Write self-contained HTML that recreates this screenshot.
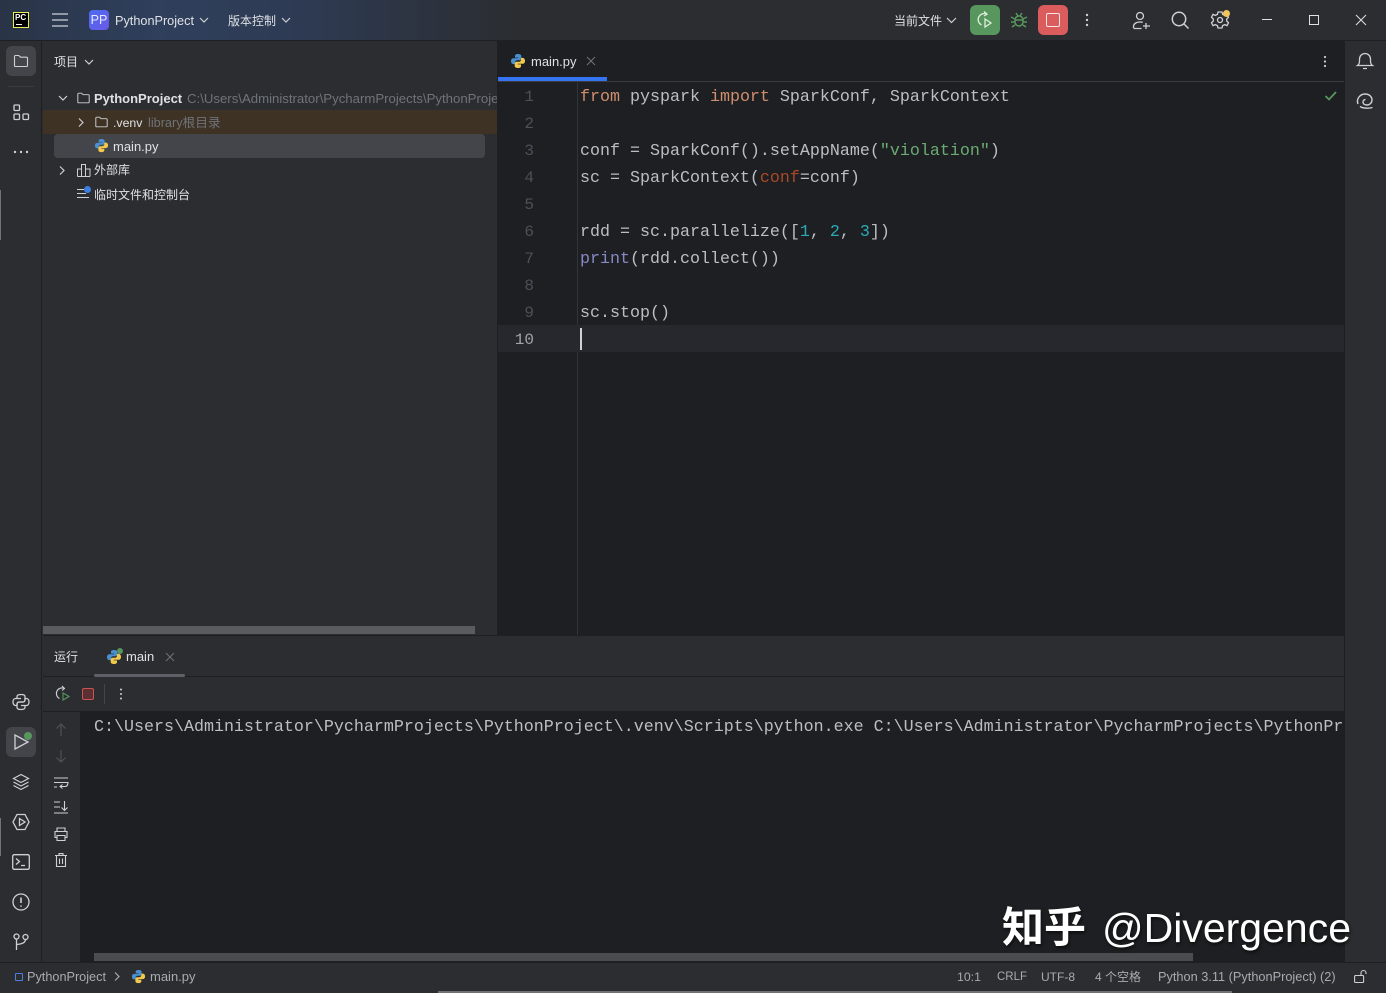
<!DOCTYPE html>
<html lang="zh"><head><meta charset="utf-8"><title>PyCharm</title>
<style>
*{box-sizing:border-box}
html,body{margin:0;padding:0;width:1386px;height:993px;overflow:hidden;background:#2b2d30}
body{position:relative;font-family:"Liberation Sans","Noto Sans CJK SC",sans-serif;font-size:13px;color:#dfe1e5;fill:none;stroke:#ced0d6;stroke-width:1.2}
.a{position:absolute}
.t{position:absolute;white-space:nowrap;line-height:18px;height:18px;margin-top:1px}
.u{margin-top:0}
.m{position:absolute;white-space:pre;font-family:"Liberation Mono",monospace;font-size:16.67px;line-height:27px;height:27px;color:#bcbec4;margin-top:1px}
.n{position:absolute;left:498px;width:36px;text-align:right;font-family:"Liberation Mono",monospace;font-size:16px;line-height:27px;color:#4b5059;margin-top:1px}
.k{color:#cf8e6d}.b{color:#8888c6}.s{color:#6aab73}.d{color:#2aacb8}.p{color:#aa4926}
svg{position:absolute;overflow:visible}
</style></head><body>
<svg width="0" height="0" style="position:absolute"><defs>
<symbol id="py" viewBox="0 0 16 16" overflow="visible"><path d="M8 1C5.600 1 5 2 5 3v1.600h3.200v.6H3.300C2 5.200 1 6.300 1 8.100s1 3 2.300 3H5V9.300c0-1.200 1-2.100 2.200-2.100h2.300c1 0 1.800-.8 1.800-1.800V3c0-1.200-1.300-2-3.300-2z" fill="#4a8fd0" stroke="none"/><path d="M8 15c2.400 0 3-1 3-2v-1.600H7.800v-.6h4.900c1.300 0 2.300-1.100 2.300-2.900s-1-3-2.300-3H11v1.800c0 1.200-1 2.100-2.200 2.100H6.500c-1 0-1.800.8-1.800 1.800V13c0 1.200 1.300 2 3.300 2z" fill="#f2c94c" stroke="none"/></symbol>
<symbol id="fold" viewBox="0 0 16 16" overflow="visible"><path d="M1.500 12.500v-9a1 1 0 0 1 1-1h3.300l1.700 1.700h6a1 1 0 0 1 1 1v7.300a1 1 0 0 1-1 1h-11a1 1 0 0 1-1-1z" fill="none" stroke="#ced0d6" stroke-width="1.100"/></symbol>
</defs></svg>

<!-- title bar -->
<div class="a" style="left:0;top:0;width:1386px;height:40px;background:#2b2d30"></div>
<div class="a" style="left:0;top:0;width:520px;height:40px;background:linear-gradient(90deg,#2a3446 0%,#2f3f5c 30%,#2e3a52 60%,#2b2d30 100%)"></div>
<div class="a" style="left:0;top:40px;width:1386px;height:1px;background:#1e1f22"></div>
<div class="a" style="left:13px;top:12px;width:16px;height:16px;background:#000;border:1px solid #e9ee55"></div>
<div class="t u" style="left:15px;top:13px;font-size:8px;font-weight:bold;color:#fff;line-height:10px;height:10px">PC</div>
<div class="a" style="left:16px;top:24px;width:6px;height:1px;background:#fff"></div>
<svg style="left:52px;top:13px" width="16" height="14" stroke-width="1.300"><path d="M0 1h16M0 7h16M0 13h16"/></svg>
<div class="a" style="left:89px;top:10px;width:20px;height:20px;border-radius:4px;background:linear-gradient(135deg,#4b6df0,#6a58e8)"></div>
<div class="t" style="left:89px;top:10px;width:20px;text-align:center;font-size:12.500px;color:#e8ebff">PP</div>
<div class="t" style="left:115px;top:11px;font-size:12.700px">PythonProject</div>
<svg style="left:199px;top:17px" width="10" height="6"><path d="M1 1l4 4 4-4"/></svg>
<div class="t" style="left:228px;top:11px;font-size:12px">版本控制</div>
<svg style="left:281px;top:17px" width="10" height="6"><path d="M1 1l4 4 4-4"/></svg>
<div class="t" style="left:894px;top:11px;font-size:12px">当前文件</div>
<svg style="left:946px;top:17px" width="11" height="6"><path d="M1 1l4.500 4.500 4.500-4.500"/></svg>
<div class="a" style="left:970px;top:5px;width:30px;height:30px;border-radius:6px;background:#57965c"></div>
<svg style="left:976px;top:11px" width="18" height="18" stroke="#dcefdc" stroke-width="1.300"><path d="M11 3.200A6 6 0 1 0 5.500 14"/><path d="M8 .5l3 2.700-3 1.800"/><path d="M9 8v8l6-4z"/></svg>
<svg style="left:1011px;top:11px" width="16" height="18" stroke="#57965c" stroke-width="1.500"><rect x="4" y="5" width="8" height="10" rx="4"/><path d="M5 2l2 3M11 2L9 5M0 6l4 2M16 6l-4 2M0 11h4M16 11h-4M1 16l3-2M15 16l-3-2M4 9h8"/></svg>
<div class="a" style="left:1038px;top:5px;width:30px;height:30px;border-radius:6px;background:#db5c5c"></div>
<div class="a" style="left:1046px;top:13px;width:14px;height:14px;border-radius:2px;border:1.500px solid #fbe4e4"></div>
<svg style="left:1085px;top:13px" width="4" height="14" fill="#ced0d6" stroke="none"><circle cx="2" cy="2" r="1.200"/><circle cx="2" cy="7" r="1.200"/><circle cx="2" cy="12" r="1.200"/></svg>
<svg style="left:1132px;top:11px" width="19" height="19" stroke-width="1.300"><circle cx="8" cy="5" r="3.500"/><path d="M1.500 17v-1.500c0-2.500 2.500-4.500 6.500-4.500 1 0 2 .1 2.800.4M1.500 17.500h8M14 12v6M11 15h7"/></svg>
<svg style="left:1171px;top:11px" width="18" height="18" stroke-width="1.500"><circle cx="8" cy="8" r="6.700"/><path d="M13 13l4.500 4.500"/></svg>
<svg style="left:1211px;top:11px" width="18" height="18" stroke-width="1.300"><path d="M7 1h4l.6 2.400 2.200 1 2.200-1 1.500 2.800-1.800 1.800v2l1.800 1.800-1.500 2.800-2.200-1-2.200 1L11 17H7l-.6-2.400-2.200-1-2.200 1L.5 11.800l1.800-1.800V8L.5 6.200 2 3.400l2.200 1 2.200-1z"/><circle cx="9" cy="9" r="2.500"/></svg>
<div class="a" style="left:1223px;top:10px;width:7px;height:7px;border-radius:50%;background:#f2c55c"></div>
<div class="a" style="left:1262px;top:19px;width:10px;height:1px;background:#dfe1e5"></div>
<div class="a" style="left:1309px;top:15px;width:10px;height:10px;border:1px solid #dfe1e5"></div>
<svg style="left:1356px;top:15px" width="10" height="10" stroke="#dfe1e5" stroke-width="1"><path d="M0 0l10 10M10 0L0 10"/></svg>

<!-- left strip -->
<div class="a" style="left:0;top:41px;width:42px;height:921px;background:#2b2d30;border-right:1px solid #1e1f22"></div>
<div class="a" style="left:6px;top:46px;width:30px;height:30px;border-radius:6px;background:#43454a"></div>
<svg style="left:12px;top:53px" width="18" height="16"><use href="#fold" width="18" height="16"/></svg>
<div class="a" style="left:8px;top:86px;width:26px;height:1px;background:#393b40"></div>
<svg style="left:13px;top:104px" width="16" height="16" stroke-width="1.300"><rect x="1" y="1" width="5.500" height="5.500" rx="1"/><rect x="1" y="10" width="5.500" height="5.500" rx="1"/><rect x="10" y="10" width="5.500" height="5.500" rx="1"/></svg>
<svg style="left:13px;top:150px" width="16" height="4" fill="#ced0d6" stroke="none"><circle cx="2" cy="2" r="1.200"/><circle cx="8" cy="2" r="1.200"/><circle cx="14" cy="2" r="1.200"/></svg>
<div class="a" style="left:0;top:190px;width:1px;height:50px;background:#6f737a"></div>
<svg style="left:12px;top:693px" width="18" height="18" stroke-width="1.300"><path d="M5 12.500H3.500C2 12.500 1 11 1 9s1-3.500 2.500-3.500H9M5 5.500V3.500C5 2.200 6.500 1.500 9 1.500s4 .7 4 2V7c0 1.100-.9 2-2 2H7c-1.100 0-2 .9-2 2v1.500"/><path transform="rotate(180 9 9)" d="M5 12.500H3.500C2 12.500 1 11 1 9s1-3.500 2.500-3.500H9M5 5.500V3.500C5 2.200 6.500 1.500 9 1.500s4 .7 4 2V7c0 1.100-.9 2-2 2H7c-1.100 0-2 .9-2 2v1.500"/></svg>
<div class="a" style="left:6px;top:727px;width:30px;height:30px;border-radius:6px;background:#43454a"></div>
<svg style="left:14px;top:734px" width="16" height="16" stroke-width="1.300"><path d="M1 1v14l13-7z"/></svg>
<div class="a" style="left:24px;top:732px;width:8px;height:8px;border-radius:50%;background:#57965c"></div>
<svg style="left:12px;top:773px" width="18" height="18" stroke-width="1.200"><path d="M9 1.500l7.500 4L9 9.500l-7.500-4zM1.500 9L9 13l7.500-4M1.500 12.500L9 16.500l7.500-4"/></svg>
<svg style="left:12px;top:813px" width="18" height="18" stroke-width="1.300"><path d="M5 1.500h8l4 7.500-4 7.500H5L1 9z"/><path d="M7.500 5.500v7l5.500-3.500z"/></svg>
<svg style="left:12px;top:854px" width="18" height="16" stroke-width="1.300"><rect x=".7" y=".7" width="16.600" height="14.600" rx="1.500"/><path d="M4 4.500L7.500 7.500 4 10.500M9 11.500h4"/></svg>
<svg style="left:12px;top:893px" width="18" height="18" stroke-width="1.300"><circle cx="9" cy="9" r="8"/><path d="M9 4.500v5.500M9 12.500v1.300" stroke-width="1.600"/></svg>
<svg style="left:13px;top:933px" width="16" height="18" stroke-width="1.300"><circle cx="3.500" cy="3.500" r="2.500"/><circle cx="12.500" cy="4" r="2.500"/><path d="M3.500 6v11M12.500 6.500c0 3-3 4.500-9 5"/></svg>
<div class="a" style="left:0;top:818px;width:1px;height:38px;background:#6f737a"></div>

<!-- project panel -->
<div class="a" style="left:43px;top:41px;width:454px;height:594px;background:#2b2d30"></div>
<div class="t" style="left:54px;top:52px;font-size:12px">项目</div>
<svg style="left:84px;top:59px" width="10" height="6"><path d="M1 1l4 4 4-4"/></svg>
<svg style="left:58px;top:95px" width="10" height="6"><path d="M1 1l4 4 4-4"/></svg>
<svg style="left:76px;top:91px" width="15" height="14"><use href="#fold" width="15" height="14"/></svg>
<div class="t" style="left:94px;top:89px;font-size:13px;font-weight:bold;color:#dfe1e5">PythonProject</div>
<div class="a" style="left:187px;top:90px;width:310px;height:18px;overflow:hidden;white-space:nowrap;line-height:18px;font-size:13.200px;color:#6f737a">C:\Users\Administrator\PycharmProjects\PythonProject</div>
<div class="a" style="left:43px;top:110px;width:454px;height:24px;background:#3d3223"></div>
<svg style="left:78px;top:118px" width="6" height="9"><path d="M1 .5l4 4-4 4"/></svg>
<svg style="left:94px;top:115px" width="15" height="14"><use href="#fold" width="15" height="14"/></svg>
<div class="t" style="left:113px;top:113px;font-size:12.300px">.venv</div>
<div class="t" style="left:148px;top:113px;font-size:12.700px;color:#6f737a">library根目录</div>
<div class="a" style="left:54px;top:134px;width:431px;height:24px;border-radius:4px;background:#43454a"></div>
<svg style="left:94px;top:138px" width="15" height="15"><use href="#py" width="15" height="15"/></svg>
<div class="t" style="left:113px;top:137px;font-size:13px">main.py</div>
<svg style="left:59px;top:166px" width="6" height="9"><path d="M1 .5l4 4-4 4"/></svg>
<svg style="left:77px;top:164px" width="14" height="13" stroke-width="1"><path d="M.5 12.500V5h4v7.500M4.500 12.500V.5h4v12M8.500 12.500V5h4.500v7.500M.5 12.500h12.500"/></svg>
<div class="t" style="left:94px;top:160px;font-size:12px">外部库</div>
<svg style="left:77px;top:188px" width="12" height="11" stroke-width="1"><path d="M0 1.500h7M0 5.500h9M0 9.500h12"/></svg>
<div class="a" style="left:84px;top:186px;width:7px;height:7px;border-radius:50%;background:#3d7fe0"></div>
<div class="t" style="left:94px;top:185px;font-size:12px">临时文件和控制台</div>
<div class="a" style="left:43px;top:626px;width:432px;height:8px;background:#5a5b5e"></div>

<!-- editor -->
<div class="a" style="left:497px;top:41px;width:847px;height:594px;background:#1e1f22;border-left:1px solid #1e1f22"></div>
<div class="a" style="left:498px;top:81px;width:846px;height:1px;background:#393b40"></div>
<div class="a" style="left:498px;top:77px;width:109px;height:4px;background:#3574f0"></div>
<svg style="left:510px;top:53px" width="16" height="16"><use href="#py" width="16" height="16"/></svg>
<div class="t" style="left:531px;top:52px;font-size:13px">main.py</div>
<svg style="left:587px;top:57px" width="8" height="8" stroke="#6f737a" stroke-width="1"><path d="M0 0l8 8M8 0L0 8"/></svg>
<svg style="left:1323px;top:55px" width="4" height="13" fill="#ced0d6" stroke="none"><circle cx="2" cy="2" r="1.100"/><circle cx="2" cy="6.500" r="1.100"/><circle cx="2" cy="11" r="1.100"/></svg>
<div class="a" style="left:577px;top:82px;width:1px;height:553px;background:#313438"></div>
<div class="a" style="left:498px;top:325px;width:846px;height:27px;background:#26282e"></div>
<div class="n" style="top:83px">1</div><div class="n" style="top:110px">2</div><div class="n" style="top:137px">3</div><div class="n" style="top:164px">4</div><div class="n" style="top:191px">5</div><div class="n" style="top:218px">6</div><div class="n" style="top:245px">7</div><div class="n" style="top:272px">8</div><div class="n" style="top:299px">9</div><div class="n" style="top:326px;color:#a1a3ab">10</div>
<div class="m" style="left:580px;top:83px"><span class="k">from</span> pyspark <span class="k">import</span> SparkConf, SparkContext</div>
<div class="m" style="left:580px;top:137px">conf = SparkConf().setAppName(<span class="s">"violation"</span>)</div>
<div class="m" style="left:580px;top:164px">sc = SparkContext(<span class="p">conf</span>=conf)</div>
<div class="m" style="left:580px;top:218px">rdd = sc.parallelize([<span class="d">1</span>, <span class="d">2</span>, <span class="d">3</span>])</div>
<div class="m" style="left:580px;top:245px"><span class="b">print</span>(rdd.collect())</div>
<div class="m" style="left:580px;top:299px">sc.stop()</div>
<div class="a" style="left:580px;top:328px;width:2px;height:22px;background:#ced0d6"></div>
<svg style="left:1325px;top:91px" width="12" height="10" stroke="#57965c" stroke-width="1.800"><path d="M.5 5l3.500 3.500L11 1"/></svg>

<!-- right strip -->
<div class="a" style="left:1344px;top:41px;width:42px;height:921px;background:#2b2d30;border-left:1px solid #1e1f22"></div>
<svg style="left:1356px;top:52px" width="18" height="18" stroke-width="1.300"><path d="M1.500 13.500c1.500-1 2-2.500 2-4.500V7a5.500 5.500 0 0 1 11 0v2c0 2 .5 3.500 2 4.500zM7 16.500h4"/></svg>
<svg style="left:1356px;top:92px" width="18" height="18" stroke-width="1.400"><path d="M2 12C0 7 4 2 9 2c4 0 7 2.500 7 6 0 3-2.500 5-5 5-2 0-4-1-4-3 0-1.500 1.200-2.500 2.500-2.500M4 14.500c3 2 9 2 12.500 1"/></svg>

<!-- run panel -->
<div class="a" style="left:43px;top:635px;width:1301px;height:327px;background:#2b2d30;border-top:1px solid #1e1f22"></div>
<div class="a" style="left:43px;top:676px;width:1301px;height:1px;background:#1e1f22"></div>
<div class="t" style="left:54px;top:647px;font-size:12px">运行</div>
<svg style="left:106px;top:649px" width="16" height="16"><use href="#py" width="16" height="16"/></svg>
<div class="a" style="left:117px;top:648px;width:6px;height:6px;border-radius:50%;background:#57965c"></div>
<div class="t" style="left:126px;top:647px;font-size:13px">main</div>
<svg style="left:166px;top:653px" width="8" height="8" stroke="#6f737a" stroke-width="1"><path d="M0 0l8 8M8 0L0 8"/></svg>
<div class="a" style="left:94px;top:674px;width:91px;height:3px;background:#5d6066;border-radius:1.500px"></div>
<svg style="left:55px;top:686px" width="15" height="15" stroke-width="1.100"><path d="M9.500 2.500A5.500 5.500 0 1 0 4.500 12.500"/><path d="M7 0l2.500 2.500L7 4.500"/><path d="M8 7v7l6-3.500z" stroke="#57965c"/></svg>
<div class="a" style="left:82px;top:688px;width:12px;height:12px;border-radius:2px;background:#5c2f32;border:1px solid #c75450"></div>
<div class="a" style="left:104px;top:684px;width:1px;height:20px;background:#43454a"></div>
<svg style="left:119px;top:688px" width="4" height="12" fill="#ced0d6" stroke="none"><circle cx="2" cy="1.500" r="1"/><circle cx="2" cy="6" r="1"/><circle cx="2" cy="10.500" r="1"/></svg>
<div class="a" style="left:43px;top:711px;width:1301px;height:1px;background:#1e1f22"></div>
<div class="a" style="left:80px;top:712px;width:1264px;height:250px;background:#1e1f22"></div>
<svg style="left:55px;top:723px" width="12" height="14" stroke="#4e5157" stroke-width="1.200"><path d="M6 13V1M1.500 5.500L6 1l4.500 4.500"/></svg>
<svg style="left:55px;top:749px" width="12" height="14" stroke="#4e5157" stroke-width="1.200"><path d="M6 1v12M1.500 8.500L6 13l4.500-4.500"/></svg>
<svg style="left:54px;top:777px" width="14" height="12" stroke-width="1.100"><path d="M0 1h14M0 5.500h14c0 0 0 4-3 4H6M8.500 7.500L6 9.500l2.500 2M0 10h3"/></svg>
<svg style="left:54px;top:801px" width="14" height="13" stroke-width="1.100"><path d="M0 1h6M0 6h6M0 12h14M10.500 0v9.500M7.500 6.500l3 3 3-3"/></svg>
<svg style="left:54px;top:827px" width="14" height="14" stroke-width="1.100"><path d="M3 4V1h8v3M3 10.500H1V4.500h12v6h-2M3 8.500h8v5H3z"/></svg>
<svg style="left:55px;top:853px" width="12" height="14" stroke-width="1.100"><path d="M0 2.500h12M4 2.500V.6h4v1.900M1.500 2.500v11h9v-11M4.500 5.500v5.500M7.500 5.500v5.500"/></svg>
<div class="a" style="left:94px;top:712px;width:1250px;height:30px;overflow:hidden"><div class="m" style="left:0;top:1px">C:\Users\Administrator\PycharmProjects\PythonProject\.venv\Scripts\python.exe C:\Users\Administrator\PycharmProjects\PythonProject\main.py</div></div>
<div class="a" style="left:94px;top:953px;width:1099px;height:8px;background:#4b4c4f"></div>

<!-- watermark -->
<div class="t u" style="left:1002px;top:900px;height:56px;line-height:56px;font-size:42px;color:#fff;font-weight:bold;text-shadow:1px 2px 3px rgba(0,0,0,.6)">知乎</div>
<div class="t u" style="left:1102px;top:900px;height:56px;line-height:56px;font-size:41px;color:#fff;text-shadow:1px 2px 3px rgba(0,0,0,.6)">@Divergence</div>

<!-- status bar -->
<div class="a" style="left:0;top:962px;width:1386px;height:31px;background:#2b2d30;border-top:1px solid #1e1f22"></div>
<div class="a" style="left:15px;top:973px;width:8px;height:8px;border:1px solid #4a7fe0;border-radius:1px"></div>
<div class="t u" style="left:27px;top:968px;font-size:12.700px;color:#a8abb2">PythonProject</div>
<svg style="left:114px;top:972px" width="6" height="9" stroke="#a8abb2"><path d="M1 .5l4 4-4 4"/></svg>
<svg style="left:131px;top:969px" width="15" height="15"><use href="#py" width="15" height="15"/></svg>
<div class="t u" style="left:150px;top:968px;font-size:13px;color:#a8abb2">main.py</div>
<div class="t u" style="left:957px;top:968px;font-size:12.300px;color:#a8abb2">10:1</div>
<div class="t u" style="left:997px;top:968px;font-size:11.500px;color:#a8abb2">CRLF</div>
<div class="t u" style="left:1041px;top:968px;font-size:12px;color:#a8abb2">UTF-8</div>
<div class="t u" style="left:1095px;top:968px;font-size:12px;color:#a8abb2">4 个空格</div>
<div class="t u" style="left:1158px;top:968px;font-size:12.750px;color:#a8abb2">Python 3.11 (PythonProject) (2)</div>
<svg style="left:1354px;top:970px" width="14" height="13" stroke-width="1.100"><rect x=".6" y="5.500" width="9" height="7" rx="1"/><path d="M7 5.500V3a2.500 2.500 0 0 1 5 0v1"/></svg>
<div class="a" style="left:438px;top:991px;width:794px;height:2px;background:#6f7074"></div>
</body></html>
